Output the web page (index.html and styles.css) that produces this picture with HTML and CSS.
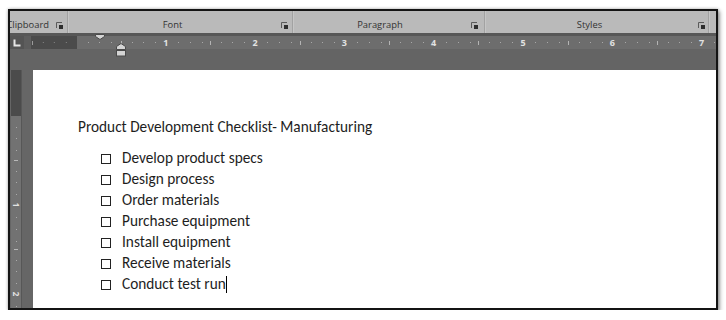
FILE: index.html
```html
<!DOCTYPE html>
<html>
<head>
<meta charset="utf-8">
<link rel="stylesheet" href="styles.css">
</head>
<body>
<div class="frame">
  <div class="ribbon">
    <div class="group g-clip">
      <span class="glabel">Clipboard</span>
      <svg class="launcher" width="7" height="7" viewBox="0 0 7 7"><path d="M0.5 6V0.5H6" fill="none" stroke="#5a5a5a"/><rect x="3" y="3" width="4" height="4" fill="#2e2e2e"/></svg>
    </div>
    <div class="group g-font">
      <span class="glabel">Font</span>
      <svg class="launcher" width="7" height="7" viewBox="0 0 7 7"><path d="M0.5 6V0.5H6" fill="none" stroke="#5a5a5a"/><rect x="3" y="3" width="4" height="4" fill="#2e2e2e"/></svg>
    </div>
    <div class="group g-para">
      <span class="glabel">Paragraph</span>
      <svg class="launcher" width="7" height="7" viewBox="0 0 7 7"><path d="M0.5 6V0.5H6" fill="none" stroke="#5a5a5a"/><rect x="3" y="3" width="4" height="4" fill="#2e2e2e"/></svg>
    </div>
    <div class="group g-styles">
      <span class="glabel">Styles</span>
      <svg class="launcher" width="7" height="7" viewBox="0 0 7 7"><path d="M0.5 6V0.5H6" fill="none" stroke="#5a5a5a"/><rect x="3" y="3" width="4" height="4" fill="#2e2e2e"/></svg>
    </div>
    <div class="group g-rest"></div>
  </div>
  <div class="strip"></div>
  <div class="rulerrow">
    <div class="tabbtn">
      <svg width="8" height="8" viewBox="0 0 8 8"><path d="M1.5 0.5V6.5H7.5" fill="none" stroke="#e6e6e6" stroke-width="2"/></svg>
    </div>
    <div class="ruler">
      <div class="rmargin"></div>
      <div class="rbody">
        <div class="rhalf"></div>
        <div class="rcell"><span class="rnum">1</span></div>
        <div class="rcell"><span class="rnum">2</span></div>
        <div class="rcell"><span class="rnum">3</span></div>
        <div class="rcell"><span class="rnum">4</span></div>
        <div class="rcell"><span class="rnum">5</span></div>
        <div class="rcell"><span class="rnum">6</span></div>
        <div class="rcell"><span class="rnum">7</span></div>
      </div>
    </div>
    <svg class="mk-first" width="10" height="6" viewBox="0 0 10 6"><polygon points="0.5,0.5 9.5,0.5 9.5,2.5 5,5.5 0.5,2.5" fill="#d4d4d4" stroke="#4a4a4a"/></svg>
    <svg class="mk-hang" width="10" height="14" viewBox="0 0 10 14"><polygon points="5,0.5 9.5,3.5 9.5,6.5 0.5,6.5 0.5,3.5" fill="#d4d4d4" stroke="#4a4a4a"/><rect x="0.5" y="7.5" width="9" height="5.5" fill="#d4d4d4" stroke="#4a4a4a"/></svg>
  </div>
  <div class="below"></div>
  <div class="doc">
    <div class="vruler">
      <div class="vmargin"></div>
      <div class="vbody">
        <div class="vhalf"></div>
        <div class="vcell"><span class="vnum">1</span></div>
        <div class="vcell"><span class="vnum">2</span></div>
      </div>
    </div>
    <div class="page">
      <p class="title">Product Development Checklist- Manufacturing</p>
      <ul class="checklist">
        <li><span class="box"></span>Develop product specs</li>
        <li><span class="box"></span>Design process</li>
        <li><span class="box"></span>Order materials</li>
        <li><span class="box"></span>Purchase equipment</li>
        <li><span class="box"></span>Install equipment</li>
        <li><span class="box"></span>Receive materials</li>
        <li><span class="box"></span>Conduct test run<span class="caret"></span></li>
      </ul>
    </div>
  </div>
</div>
</body>
</html>
```
FILE: styles.css
```css
html, body {
  margin: 0;
  padding: 0;
  background: #ffffff;
}

.frame {
  margin: 9px 0 0 8px;
  width: 706px;
  height: 297px;
  border: 2px solid #141414;
  box-shadow: 0 0 3px rgba(0, 0, 0, 0.3), 2px 2px 4px rgba(0, 0, 0, 0.35);
  display: flex;
  flex-direction: column;
  overflow: hidden;
  background: #666666;
}

/* ---------- ribbon ---------- */
.ribbon {
  height: 22px;
  flex: 0 0 22px;
  display: flex;
  background: #bababa;
  font-family: "Open Sans", "Noto Sans", sans-serif;
  font-size: 9.4px;
  color: #333333;
}

.group {
  display: flex;
  align-items: flex-start;
  flex-shrink: 0;
  box-sizing: border-box;
  border-right: 1px solid #a2a2a2;
  box-shadow: 1px 0 0 #c6c6c6;
  overflow: hidden;
}

.glabel {
  flex: 1 1 auto;
  text-align: center;
  white-space: nowrap;
  line-height: 12px;
  padding-top: 8px;
}

.launcher {
  flex: 0 0 7px;
  margin-top: 11px;
  margin-left: 4px;
}

.g-clip { width: 58px; justify-content: flex-end; padding-right: 4px; }
.g-clip .glabel { flex: 0 0 auto; }
.g-clip .launcher { margin-left: 7px; }
.g-font { width: 225px; padding-right: 4px; }
.g-para { width: 192px; padding-right: 6px; }
.g-styles { width: 224px; padding-right: 3px; }
.g-rest { flex: 1 1 auto; border-right: 0; box-shadow: none; }

.strip {
  flex: 0 0 3px;
  background: #575757;
}

/* ---------- horizontal ruler ---------- */
.rulerrow {
  position: relative;
  flex: 0 0 13px;
  display: flex;
  background: #5d5d5d;
}

.tabbtn {
  flex: 0 0 14px;
  display: flex;
  align-items: center;
  justify-content: center;
  background: #545454;
}

.ruler {
  flex: 1 1 auto;
  min-width: 0;
  margin-left: 7px;
  display: flex;
}

.rmargin {
  flex: 0 0 45.5px;
  background:
    linear-gradient(#9a9a9a, #9a9a9a) 0.5px 50% / 1px 4px no-repeat,
    repeating-linear-gradient(to right, transparent 0 10.66px, #858585 10.66px 11.66px) 0.84px 50% / 100% 1px repeat-x,
    #4b4b4b;
}

.rbody {
  flex: 1 1 auto;
  min-width: 0;
  display: flex;
  overflow: hidden;
  background: #6d6d6d;
  font-family: "Open Sans", "Noto Sans", sans-serif;
  font-size: 9px;
  font-weight: 700;
  color: #e2e2e2;
}

.rhalf {
  flex: 0 0 44.65px;
  background: repeating-linear-gradient(to right, transparent 0 10.66px, #a8a8a8 10.66px 11.66px) 0 50% / 100% 1px no-repeat;
}

.rcell {
  flex: 0 0 89.3px;
  display: flex;
  align-items: center;
  justify-content: center;
  background:
    linear-gradient(#b4b4b4, #b4b4b4) 0 50% / 1px 4px no-repeat,
    repeating-linear-gradient(to right, transparent 0 10.66px, #a8a8a8 10.66px 11.66px) 0 50% / 100% 1px no-repeat;
}

.rnum {
  background: #6d6d6d;
  line-height: 13px;
  padding: 0 1px;
}

.mk-first {
  position: absolute;
  left: 85px;
  top: -2px;
  z-index: 2;
}

.mk-hang {
  position: absolute;
  left: 106px;
  top: 7px;
  z-index: 2;
}

.below {
  flex: 0 0 21px;
  background: #646464;
}

/* ---------- document area ---------- */
.doc {
  flex: 1;
  display: flex;
  min-height: 0;
}

.vruler {
  flex: 0 0 10px;
  margin-left: 1px;
  display: flex;
  flex-direction: column;
  border-right: 1px solid #575757;
}

.vmargin {
  flex: 0 0 45.5px;
  background: #4b4b4b;
}

.vbody {
  flex: 1;
  display: flex;
  flex-direction: column;
  overflow: hidden;
  min-height: 0;
  background: #727272;
  font-family: "Open Sans", "Noto Sans", sans-serif;
  font-size: 8px;
  font-weight: 700;
  color: #e2e2e2;
}

.vhalf {
  flex: 0 0 44.65px;
  background: repeating-linear-gradient(to bottom, transparent 0 10.66px, #ababab 10.66px 11.66px) 50% 0 / 1px 100% no-repeat;
}

.vcell {
  flex: 0 0 89.3px;
  display: flex;
  align-items: center;
  justify-content: center;
  background:
    linear-gradient(#b8b8b8, #b8b8b8) 50% 0 / 4px 1px no-repeat,
    repeating-linear-gradient(to bottom, transparent 0 10.66px, #ababab 10.66px 11.66px) 50% 0 / 1px 100% no-repeat;
}

.vnum {
  display: block;
  background: #727272;
  line-height: 8px;
  padding: 1px 0;
  transform: rotate(90deg);
}

.page {
  flex: 1;
  min-width: 0;
  margin-left: 11px;
  background: #ffffff;
  padding: 46px 0 0 45px;
  font-family: "Carlito", "Lato", sans-serif;
  font-size: 15.3px;
  color: #1e1e1e;
}

.title {
  margin: 0 0 10px 0;
  line-height: 21px;
}

.checklist {
  list-style: none;
  margin: 0;
  padding: 0 0 0 23px;
}

.checklist li {
  line-height: 21px;
  white-space: nowrap;
}

.box {
  display: inline-block;
  box-sizing: border-box;
  width: 10px;
  height: 10px;
  border: 1.3px solid #222222;
  margin-right: 11px;
  vertical-align: -1px;
}

.caret {
  display: inline-block;
  width: 1px;
  height: 17px;
  background: #000000;
  vertical-align: -4px;
  margin-left: 0.5px;
}
```
